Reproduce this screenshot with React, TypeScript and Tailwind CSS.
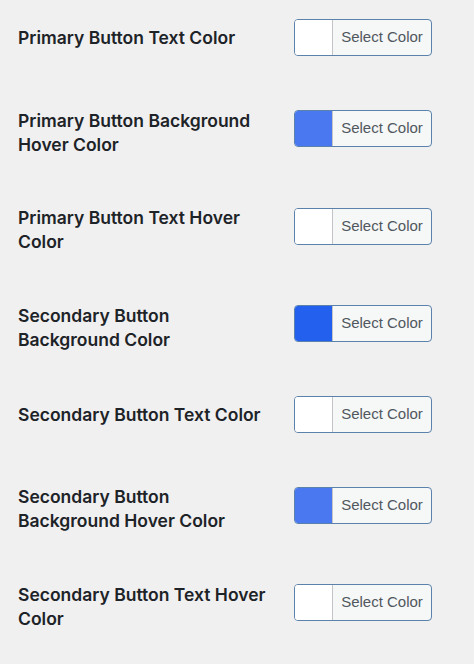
const rows = [
  { label: "Primary Button Text Color", swatch: "bg-white", rowClass: "items-center mt-[19px]", btnClass: "" },
  { label: "Primary Button Background Hover Color", swatch: "bg-[#4a78f0]", rowClass: "items-start mt-[53px]", btnClass: "mt-[1px]" },
  { label: "Primary Button Text Hover Color", swatch: "bg-white", rowClass: "items-start mt-[49px]", btnClass: "mt-[2px]" },
  { label: "Secondary Button Background Color", swatch: "bg-[#2460ee]", rowClass: "items-start mt-[50px]", btnClass: "mt-[1px]" },
  { label: "Secondary Button Text Color", swatch: "bg-white", rowClass: "items-center mt-[44px]", btnClass: "" },
  { label: "Secondary Button Background Hover Color", swatch: "bg-[#4a78f0]", rowClass: "items-start mt-[52px]", btnClass: "mt-[2px]" },
  { label: "Secondary Button Text Hover Color", swatch: "bg-white", rowClass: "items-start mt-[50px]", btnClass: "mt-[1px]" },
];

function ColorButton({ swatch, className }: { swatch: string; className: string }) {
  return (
    <button
      className={`flex h-[37px] w-[138px] shrink-0 overflow-hidden rounded-[4px] border border-[#5a82ab] bg-[#f6f7f7] ${className}`}
    >
      <span className={`h-full w-[38px] border-r border-[#c3c4c7] ${swatch}`} />
      <span className="flex flex-1 items-center justify-center text-[15px] text-[#50575e] font-['Liberation_Sans',sans-serif]">
        Select Color
      </span>
    </button>
  );
}

export default function App() {
  return (
    <div className="min-h-[664px] w-[474px] bg-[#f0f0f1] font-['Inter',sans-serif]">
      <div className="flex flex-col pl-[18px]">
        {rows.map((r) => (
          <div key={r.label} className={`flex ${r.rowClass}`}>
            <div className="w-[252px] text-[17.5px] leading-[24px] font-semibold text-[#1d2327]">{r.label}</div>
            <div className="ml-[24px]">
              <ColorButton swatch={r.swatch} className={r.btnClass} />
            </div>
          </div>
        ))}
      </div>
    </div>
  );
}
